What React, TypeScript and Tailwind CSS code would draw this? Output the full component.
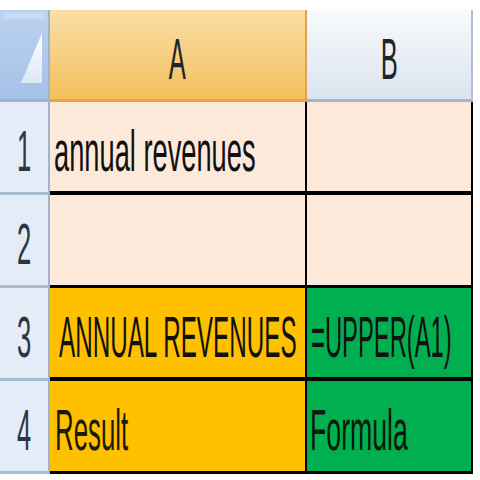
// Excel-style sheet snippet: UPPER() example, two columns, four rows.

const FONT = "font-['Liberation_Sans',Arial,sans-serif]";

function RowHead({ n }: { n: string }) {
  return (
    <div className="flex w-[50px] shrink-0 items-center justify-center border-r-2 border-b-[3px] border-r-[#9fb4cc] border-b-[#a9bdd3] bg-[#e4ecf7] pt-2">
      <span className={`${FONT} inline-block scale-x-[0.44] text-[58px] leading-none text-[#2b3640]`}>{n}</span>
    </div>
  );
}

function Row({
  n,
  a,
  b,
}: {
  n: string;
  a: React.ReactNode;
  b: React.ReactNode;
}) {
  return (
    <div className="flex h-[93px]">
      <RowHead n={n} />
      {a}
      {b}
    </div>
  );
}

export default function App() {
  return (
    <div className="h-[480px] w-[480px] overflow-hidden bg-white pt-[10px]">
      {/* column headers */}
      <div className="flex h-[92px]">
        <div className="flex w-[50px] shrink-0 border-r-2 border-b-[3px] border-r-[#9fb4cc] border-b-[#9db5d2] bg-gradient-to-b from-[#bcd2ef] to-[#a6c2e9]">
          <svg width="48" height="89" viewBox="0 0 48 89">
            <defs>
              <linearGradient id="tri" x1="0" y1="0" x2="0" y2="1">
                <stop offset="0" stopColor="#ffffff" />
                <stop offset="1" stopColor="#dde7f5" />
              </linearGradient>
            </defs>
            <rect x="3" y="3" width="42" height="6" fill="#c9dbf3" />
            <polygon points="21,73 42,73 42,23" fill="url(#tri)" />
          </svg>
        </div>
        <div className="flex w-[257px] shrink-0 items-center justify-center border-r-2 border-b-[3px] border-r-[#e8a04a] border-b-[#f0a03c] bg-gradient-to-b from-[#fadfa6] to-[#f2c05a] pt-2">
          <span className={`${FONT} inline-block scale-x-[0.44] text-[58px] leading-none text-[#1e2626]`}>A</span>
        </div>
        <div className="flex w-[166px] shrink-0 items-center justify-center border-r-2 border-b-[3px] border-r-[#b0c0d4] border-b-[#a3b6cc] bg-gradient-to-b from-[#f8fafd] to-[#dbe4ef] pt-2">
          <span className={`${FONT} inline-block scale-x-[0.44] text-[58px] leading-none text-[#1e2626]`}>B</span>
        </div>
      </div>

      <Row
        n="1"
        a={
          <div className="flex w-[257px] shrink-0 items-center overflow-hidden border-r-2 border-b-4 border-black bg-[#fde9d9] pt-2 pl-[4px]">
            <span className={`${FONT} inline-block origin-left scale-x-[0.47] whitespace-nowrap text-[58px] leading-none text-[#111]`}>
              annual revenues
            </span>
          </div>
        }
        b={<div className="w-[166px] shrink-0 border-r-2 border-b-4 border-black bg-[#fde9d9]" />}
      />
      <Row
        n="2"
        a={<div className="w-[257px] shrink-0 border-r-2 border-b-[3px] border-black bg-[#fde9d9]" />}
        b={<div className="w-[166px] shrink-0 border-r-2 border-b-[3px] border-black bg-[#fde9d9]" />}
      />
      <Row
        n="3"
        a={
          <div className="flex w-[257px] shrink-0 items-center overflow-hidden border-r-2 border-b-4 border-black bg-[#ffc000] pt-2 pl-[9px]">
            <span className={`${FONT} inline-block origin-left scale-x-[0.418] whitespace-nowrap text-[58px] leading-none text-[#111]`}>
              ANNUAL REVENUES
            </span>
          </div>
        }
        b={
          <div className="flex w-[166px] shrink-0 items-center overflow-hidden border-r-2 border-b-4 border-black bg-[#00b050] pt-2 pl-[4px]">
            <span className={`${FONT} inline-block origin-left scale-x-[0.41] whitespace-nowrap text-[58px] leading-none text-[#111]`}>
              =UPPER(A1)
            </span>
          </div>
        }
      />
      <Row
        n="4"
        a={
          <div className="flex w-[257px] shrink-0 items-center overflow-hidden border-r-2 border-b-[3px] border-black bg-[#ffc000] pt-2 pl-[5px]">
            <span className={`${FONT} inline-block origin-left scale-x-[0.445] whitespace-nowrap text-[58px] leading-none text-[#1a1a0a]`}>
              Result
            </span>
          </div>
        }
        b={
          <div className="flex w-[166px] shrink-0 items-center overflow-hidden border-r-2 border-b-[3px] border-black bg-[#00b050] pt-2 pl-[3px]">
            <span className={`${FONT} inline-block origin-left scale-x-[0.46] whitespace-nowrap text-[58px] leading-none text-[#0a1a0a]`}>
              Formula
            </span>
          </div>
        }
      />
    </div>
  );
}
